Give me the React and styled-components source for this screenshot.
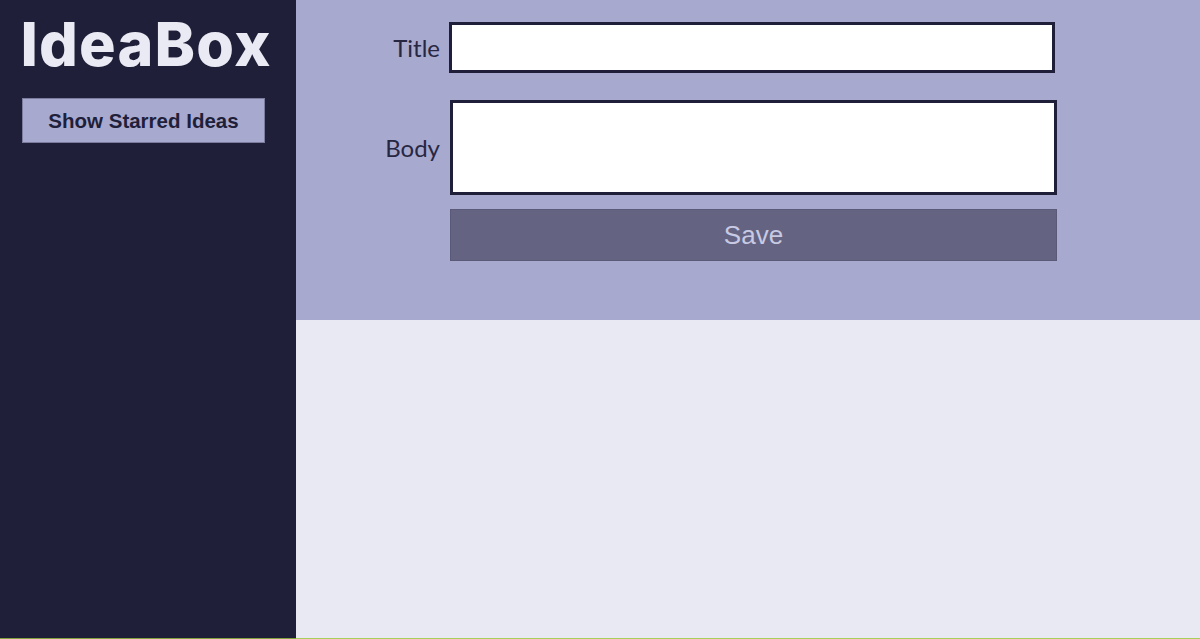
import React from 'react';
import styled, { createGlobalStyle } from 'styled-components';

const GlobalStyle = createGlobalStyle`
  html, body {
    margin: 0;
    padding: 0;
    height: 100%;
    overflow: hidden;
  }

  body {
    font-family: 'Liberation Sans', Arial, sans-serif;
    background-color: #e9e9f3;
  }
`;

const Page = styled.div`
  display: flex;
  flex-direction: column;
  height: 639px;
  width: 1200px;
`;

const Layout = styled.div`
  display: flex;
  flex: 1;
  min-height: 0;
`;

const Sidebar = styled.aside`
  display: flex;
  flex-direction: column;
  align-items: center;
  flex: 0 0 296px;
  box-sizing: border-box;
  padding: 8px 9px 0 0;
  background-color: #1f1f3a;
`;

const Logo = styled.h1`
  margin: 0 0 0 5px;
  color: #eaeaf4;
  font-family: Inter, 'Noto Sans', sans-serif;
  font-weight: 800;
  font-size: 61px;
  line-height: 72px;
  letter-spacing: 1.2px;
`;

const StarredButton = styled.button`
  margin-top: 18px;
  width: 243px;
  height: 45px;
  border: 1px solid #7b7c9e;
  background-color: #a8a9cf;
  color: #1f1f3a;
  font-family: 'Liberation Sans', Arial, sans-serif;
  font-weight: 700;
  font-size: 20.5px;
  cursor: pointer;
`;

const Main = styled.main`
  display: flex;
  flex-direction: column;
  flex: 1;
`;

const FormSection = styled.section`
  display: grid;
  grid-template-columns: 154px 607px;
  align-items: center;
  align-content: start;
  row-gap: 27px;
  height: 320px;
  box-sizing: border-box;
  padding-top: 22px;
  background-color: #a8a9cf;
`;

const Label = styled.label`
  justify-self: end;
  padding-right: 10px;
  color: #272742;
  font-family: Lato, 'Noto Sans', sans-serif;
  font-weight: 400;
  font-size: 24px;
`;

const Field = styled.input`
  box-sizing: border-box;
  width: ${({ $width }) => $width || '607px'};
  height: ${({ $height }) => $height};
  margin-left: ${({ $offset }) => $offset || '0'};
  border: 3px solid #1f1f3a;
  background-color: #fff;
  font-size: 18px;
  padding: 4px 8px;
  outline: none;
  resize: none;
`;

const SaveButton = styled.button`
  grid-column: 2;
  margin-top: -13px;
  width: 607px;
  height: 52px;
  border: 1px solid #5a5a78;
  background-color: #646482;
  color: #c8c9e3;
  font-family: 'Liberation Sans', Arial, sans-serif;
  font-size: 26px;
  cursor: pointer;
`;

const IdeasArea = styled.section`
  flex: 1;
  background-color: #e9e9f3;
`;

const BottomStrip = styled.div`
  display: flex;
  flex: 0 0 1px;
`;

const StripPart = styled.div`
  flex: ${({ $width }) => ($width ? `0 0 ${$width}` : '1')};
  background-color: ${({ $color }) => $color};
`;

const App = () => (
  <Page>
    <GlobalStyle />
    <Layout>
      <Sidebar>
        <Logo>IdeaBox</Logo>
        <StarredButton type="button">Show Starred Ideas</StarredButton>
      </Sidebar>
      <Main>
        <FormSection>
          <Label htmlFor="title">Title</Label>
          <Field id="title" type="text" $height="51px" $width="606px" $offset="-1px" />
          <Label htmlFor="body">Body</Label>
          <Field id="body" as="textarea" $height="95px" />
          <SaveButton type="button">Save</SaveButton>
        </FormSection>
        <IdeasArea />
      </Main>
    </Layout>
    <BottomStrip>
      <StripPart $width="296px" $color="#7fa23e" />
      <StripPart $color="#a6d25c" />
    </BottomStrip>
  </Page>
);

export default App;
